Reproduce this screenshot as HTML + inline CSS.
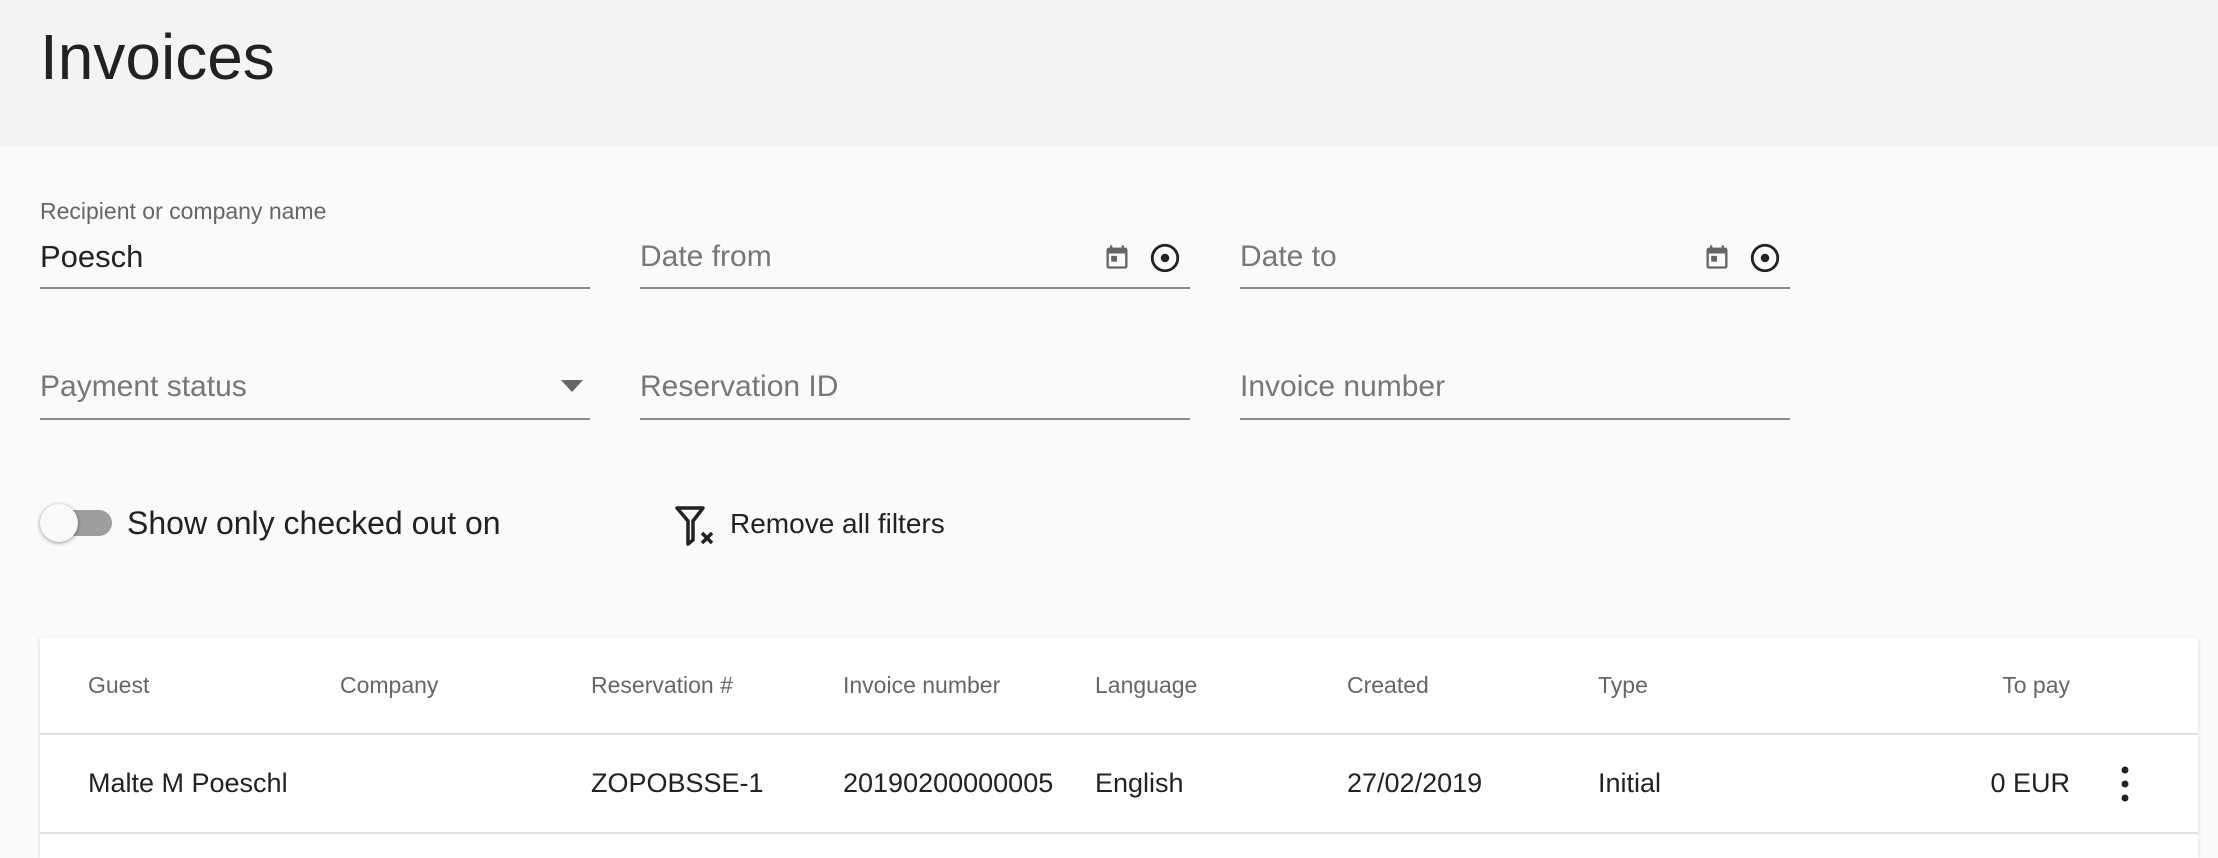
<!DOCTYPE html>
<html><head><style>
*{margin:0;padding:0;box-sizing:border-box}
body{width:2218px;height:846px;overflow:hidden;background:#fafafa;font-family:"Liberation Sans",sans-serif;position:relative}
.hdr{position:absolute;left:0;top:0;width:2218px;height:147px;background:#f4f4f4}
.t{position:absolute;left:40px;top:20px;font-size:64px;color:#222}
.a{position:absolute;white-space:nowrap}
.f{position:absolute;width:550px;height:2px;background:#8a8a8a}
.ph{font-size:30px;color:#777}
.card{position:absolute;left:40px;top:638px;width:2158px;height:220px;background:#fff;box-shadow:0 1px 4px rgba(0,0,0,.15)}
.th{font-size:23px;color:#666}
.td{font-size:27px;color:#222}
</style></head><body>
<div class="hdr"><div class="t">Invoices</div></div>

<div class="a" style="left:40px;top:198px;font-size:23px;color:#666">Recipient or company name</div>
<div class="a" style="left:40px;top:239px;font-size:31px;color:#222">Poesch</div>
<div class="f" style="left:40px;top:287px"></div>

<div class="a ph" style="left:640px;top:240px">Date from</div>
<svg class="a" style="left:1103px;top:243px" width="28" height="28" viewBox="0 0 24 24"><path fill="#666" d="M19 4h-1V2h-2v2H8V2H6v2H5a2 2 0 0 0-2 2v14a2 2 0 0 0 2 2h14a2 2 0 0 0 2-2V6a2 2 0 0 0-2-2zm0 16H5V9h14v11zM7 11h5v5H7z"/></svg>
<svg class="a" style="left:1148px;top:241px" width="34" height="34" viewBox="0 0 24 24"><circle cx="12" cy="12" r="9" fill="none" stroke="#222" stroke-width="2"/><circle cx="12" cy="12" r="3" fill="#222"/></svg>
<div class="f" style="left:640px;top:287px"></div>

<div class="a ph" style="left:1240px;top:240px">Date to</div>
<svg class="a" style="left:1703px;top:243px" width="28" height="28" viewBox="0 0 24 24"><path fill="#666" d="M19 4h-1V2h-2v2H8V2H6v2H5a2 2 0 0 0-2 2v14a2 2 0 0 0 2 2h14a2 2 0 0 0 2-2V6a2 2 0 0 0-2-2zm0 16H5V9h14v11zM7 11h5v5H7z"/></svg>
<svg class="a" style="left:1748px;top:241px" width="34" height="34" viewBox="0 0 24 24"><circle cx="12" cy="12" r="9" fill="none" stroke="#222" stroke-width="2"/><circle cx="12" cy="12" r="3" fill="#222"/></svg>
<div class="f" style="left:1240px;top:287px"></div>

<div class="a ph" style="left:40px;top:370px">Payment status</div>
<svg class="a" style="left:561px;top:380px" width="22" height="12"><path d="M0 0h22L11 12z" fill="#666"/></svg>
<div class="f" style="left:40px;top:418px"></div>
<div class="a ph" style="left:640px;top:370px">Reservation ID</div>
<div class="f" style="left:640px;top:418px"></div>
<div class="a ph" style="left:1240px;top:370px">Invoice number</div>
<div class="f" style="left:1240px;top:418px"></div>

<div class="a" style="left:44px;top:510px;width:68px;height:26px;border-radius:13px;background:#9e9e9e"></div>
<div class="a" style="left:40px;top:504px;width:38px;height:38px;border-radius:50%;background:#fafafa;box-shadow:0 1px 4px rgba(0,0,0,.4)"></div>
<div class="a" style="left:127px;top:505px;font-size:32px;color:#222">Show only checked out on</div>
<svg class="a" style="left:674px;top:505px" width="46" height="42" viewBox="0 0 46 42"><path d="M3 3h26L19 16v19l-5 4V16z" fill="none" stroke="#222" stroke-width="3.5" stroke-linejoin="round"/><path d="M28 28l10 10M38 28L28 38" stroke="#222" stroke-width="3.5"/></svg>
<div class="a" style="left:730px;top:508px;font-size:28px;color:#222">Remove all filters</div>

<div class="card">
<div class="a th" style="left:48px;top:34px">Guest</div>
<div class="a th" style="left:300px;top:34px">Company</div>
<div class="a th" style="left:551px;top:34px">Reservation #</div>
<div class="a th" style="left:803px;top:34px">Invoice number</div>
<div class="a th" style="left:1055px;top:34px">Language</div>
<div class="a th" style="left:1307px;top:34px">Created</div>
<div class="a th" style="left:1558px;top:34px">Type</div>
<div class="a th" style="right:128px;top:34px">To pay</div>
<div class="a" style="left:0;top:95px;width:2158px;height:2px;background:#e0e0e0"></div>
<div class="a td" style="left:48px;top:130px">Malte M Poeschl</div>
<div class="a td" style="left:551px;top:130px">ZOPOBSSE-1</div>
<div class="a td" style="left:803px;top:130px">20190200000005</div>
<div class="a td" style="left:1055px;top:130px">English</div>
<div class="a td" style="left:1307px;top:130px">27/02/2019</div>
<div class="a td" style="left:1558px;top:130px">Initial</div>
<div class="a td" style="right:128px;top:130px">0 EUR</div>
<svg class="a" style="left:2078px;top:127px" width="14" height="38"><circle cx="7" cy="5" r="3.5" fill="#222"/><circle cx="7" cy="19" r="3.5" fill="#222"/><circle cx="7" cy="33" r="3.5" fill="#222"/></svg>
<div class="a" style="left:0;top:194px;width:2158px;height:2px;background:#e0e0e0"></div>
</div>
</body></html>
